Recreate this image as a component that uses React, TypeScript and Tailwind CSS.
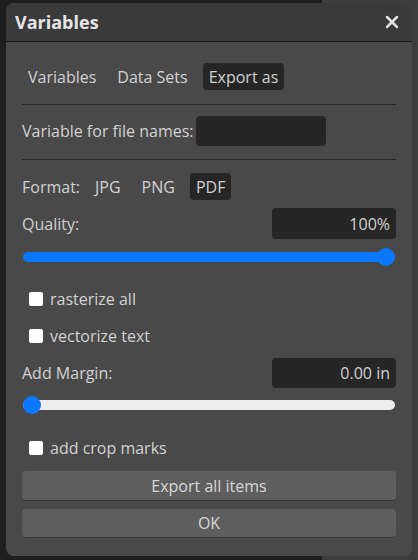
import { X } from "lucide-react";

const font = { fontFamily: '"Open Sans", "Liberation Sans", sans-serif' };

function Checkbox({ label }: { label: string }) {
  return (
    <label className="flex h-[20px] items-center gap-[7px] pl-[7px] text-[16px] text-[#d2d2d2]">
      <span className="block h-[14px] w-[14px] rounded-[2px] bg-white" />
      {label}
    </label>
  );
}

function Slider({ value, filled }: { value: number; filled: boolean }) {
  return (
    <div className="relative mx-px h-[18px]">
      <div
        className={`absolute left-0 right-0 top-[4px] h-[10px] rounded-full ${
          filled ? "bg-[#0b78ff]" : "bg-[#ececec]"
        }`}
      />
      <div
        className="absolute top-0 h-[18px] w-[18px] -translate-x-1/2 rounded-full bg-[#0b78ff]"
        style={{ left: `calc(${value}% ${value > 50 ? "- 9px" : "+ 9px"})` }}
      />
    </div>
  );
}

export default function App() {
  return (
    <div className="relative flex h-[560px] w-[418px] overflow-hidden" style={font}>
      <div className="h-full w-[322px] bg-[#1f1f1f]" />
      <div className="h-full flex-1 bg-[#3d3d3d]" />

      {/* Dialog window */}
      <div className="absolute left-[6px] top-[3px] flex h-[553px] w-[406px] flex-col overflow-hidden rounded-[8px] bg-[#494949]">
        <div className="flex h-[38px] items-center justify-between bg-[#3a3a3a] pl-[9px] pr-[10px]">
          <span className="text-[18px] font-bold text-[#e6e6e6]">Variables</span>
          <X size={20} strokeWidth={3} className="text-[#e0e0e0]" />
        </div>
        <div className="h-px bg-[#1c1c1c]" />

        <div className="flex flex-col px-4 pt-[21px]">
          {/* Tabs */}
          <div className="flex h-[27px] items-center text-[16px] text-[#d2d2d2]">
            <span className="px-[6px]">Variables</span>
            <span className="ml-[9px] px-[6px]">Data Sets</span>
            <span className="ml-[9px] flex h-full items-center rounded-[4px] bg-[#262626] px-[6px]">
              Export as
            </span>
          </div>

          <div className="mt-[14px] h-px bg-[#262626]" />

          <div className="mt-[11px] flex h-[30px] items-center text-[16px] text-[#d2d2d2]">
            <span>Variable for file names:</span>
            <div className="ml-[2px] h-full w-[130px] rounded-[4px] bg-[#262626]" />
          </div>

          <div className="mt-[13px] h-px bg-[#262626]" />

          {/* Format */}
          <div className="mt-[13px] flex h-[27px] items-center text-[16px] text-[#d2d2d2]">
            <span>Format:</span>
            <span className="ml-[9px] px-[6px]">JPG</span>
            <span className="ml-[9px] px-[6px]">PNG</span>
            <span className="ml-[9px] flex h-full items-center rounded-[4px] bg-[#262626] px-[6px]">
              PDF
            </span>
          </div>

          <div className="mt-[8px] flex h-[31px] items-center justify-between text-[16px] text-[#d2d2d2]">
            <span>Quality:</span>
            <div className="flex h-full w-[124px] items-center justify-end rounded-[4px] bg-[#262626] px-[6px]">
              100%
            </div>
          </div>

          <div className="mt-[9px]">
            <Slider value={100} filled />
          </div>

          <div className="mt-[23px]">
            <Checkbox label="rasterize all" />
          </div>
          <div className="mt-[17px]">
            <Checkbox label="vectorize text" />
          </div>

          <div className="mt-[12px] flex h-[30px] items-center justify-between text-[16px] text-[#d2d2d2]">
            <span>Add Margin:</span>
            <div className="flex h-full w-[124px] items-center justify-end rounded-[4px] bg-[#262626] px-[6px]">
              0.00 in
            </div>
          </div>

          <div className="mt-[8px]">
            <Slider value={0} filled={false} />
          </div>

          <div className="mt-[24px]">
            <Checkbox label="add crop marks" />
          </div>

          <button className="mt-[13px] h-[30px] rounded-[4px] border-b border-[#383838] bg-[#5e5e5e] text-[16px] text-[#d8d8d8]">
            Export all items
          </button>
          <button className="mt-[8px] h-[29px] rounded-[4px] border-b border-[#383838] bg-[#5e5e5e] text-[16px] text-[#d8d8d8]">
            OK
          </button>
        </div>
      </div>
    </div>
  );
}
